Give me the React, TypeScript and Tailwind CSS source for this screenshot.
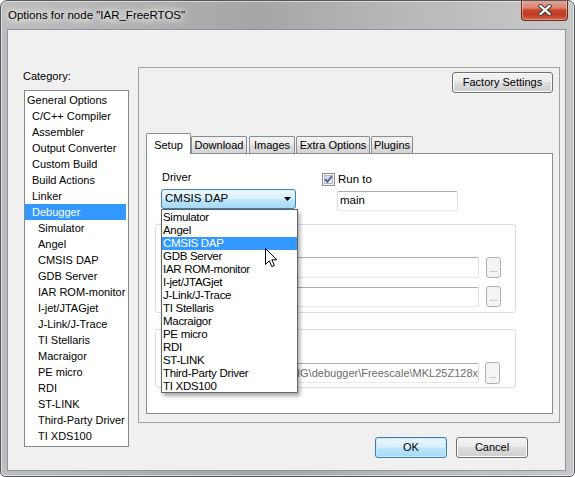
import React from "react";

const cats: [string, number][] = [
  ["General Options", 0],
  ["C/C++ Compiler", 1],
  ["Assembler", 1],
  ["Output Converter", 1],
  ["Custom Build", 1],
  ["Build Actions", 1],
  ["Linker", 1],
  ["Debugger", 1],
  ["Simulator", 2],
  ["Angel", 2],
  ["CMSIS DAP", 2],
  ["GDB Server", 2],
  ["IAR ROM-monitor", 2],
  ["I-jet/JTAGjet", 2],
  ["J-Link/J-Trace", 2],
  ["TI Stellaris", 2],
  ["Macraigor", 2],
  ["PE micro", 2],
  ["RDI", 2],
  ["ST-LINK", 2],
  ["Third-Party Driver", 2],
  ["TI XDS100", 2],
];

const indent = ["pl-[2px]", "pl-[7px]", "pl-[13px]"];

const drivers = [
  "Simulator",
  "Angel",
  "CMSIS DAP",
  "GDB Server",
  "IAR ROM-monitor",
  "I-jet/JTAGjet",
  "J-Link/J-Trace",
  "TI Stellaris",
  "Macraigor",
  "PE micro",
  "RDI",
  "ST-LINK",
  "Third-Party Driver",
  "TI XDS100",
];

const btn =
  "flex items-center justify-center rounded-[3px] border border-[#707070] bg-[linear-gradient(180deg,#f2f2f2_0%,#ebebeb_48%,#dddddd_50%,#cfcfcf_100%)] shadow-[inset_0_0_0_1px_#fcfcfc] text-black";

const tb =
  "border border-[#abadb3] border-l-[#dbdfe6] border-r-[#dbdfe6] border-b-[#e3e9ef] rounded-[2px] bg-white";

const dots =
  "flex items-end justify-center pb-[3px] rounded-[3px] border border-[#adb2b5] bg-[#f4f4f4] text-[#838383] text-[9px] leading-none";

function Tab({ label, w, sel, ml }: { label: string; w: string; sel?: boolean; ml?: string }) {
  if (sel) {
    return (
      <div className={`${w} h-[21px] border border-b-0 border-[#898c95] bg-white flex items-start justify-center pt-[3px] rounded-t-[2px]`}>
        {label}
      </div>
    );
  }
  return (
    <div
      className={`${w} ${ml ?? ""} mt-[3px] h-[17px] border border-b-0 border-[#898c95] bg-[linear-gradient(180deg,#f3f3f3_0%,#ebebeb_50%,#dddddd_52%,#d5d5d5_100%)] flex items-center justify-center rounded-t-[2px]`}
    >
      {label}
    </div>
  );
}

export default function App() {
  return (
    <div
      className="relative w-[575px] h-[477px] overflow-hidden rounded-t-[7px] rounded-b-[5px] border border-[#555a60] bg-[linear-gradient(90deg,#bdbdbd_0%,#b2b2b2_20%,#a6a6a6_45%,#b8b8b8_70%,#c8c8c8_100%)] text-[11px] text-black flex flex-col"
      style={{ fontFamily: '"Liberation Sans", Arial, sans-serif' }}
    >
      {/* glass highlight */}
      <div className="absolute inset-0 rounded-t-[6px] rounded-b-[4px] border border-white/50 pointer-events-none" />
      {/* Title bar */}
      <div className="relative h-[28px] flex items-start justify-between">
        <div className="mt-[7px] ml-[7px] text-[11.5px] leading-[14px] [text-shadow:0_0_6px_#ffffff,0_0_10px_#ffffff,0_0_14px_#ffffff]">
          {'Options for node "IAR_FreeRTOS"'}
        </div>
        <div className="mr-[6px] -mt-[1px] w-[47px] h-[21px] rounded-b-[4px] border border-t-0 border-[#6b2a20] bg-[linear-gradient(180deg,#e6a898_0%,#d88470_40%,#c6452b_50%,#c13a22_75%,#d4684c_100%)] shadow-[inset_0_0_0_1px_rgba(255,255,255,0.35)] flex items-center justify-center">
          <svg width="14" height="12" viewBox="0 0 14 12">
            <path d="M2.5 2 L11.5 10 M11.5 2 L2.5 10" stroke="#3c3c3c" strokeWidth="4.2" strokeLinecap="square" />
            <path d="M2.5 2 L11.5 10 M11.5 2 L2.5 10" stroke="#ffffff" strokeWidth="2.2" strokeLinecap="square" />
          </svg>
        </div>
      </div>

      {/* Client area */}
      <div className="relative ml-[6px] mr-[8px] h-[442px] border border-[#8a95a1] bg-[#f0f0f0] flex">
        {/* Left column */}
        <div className="ml-[16px] flex flex-col">
          <div className="mt-[40px] h-[13px] leading-[13px] -ml-[1px]">Category:</div>
          <div className="mt-[7px] w-[105px] h-[357px] border border-[#828790] bg-white pt-[1px]">
            {cats.map(([name, lvl]) => (
              <div
                key={name}
                className={`h-[16px] leading-[16px] mr-[2px] whitespace-nowrap ${indent[lvl]} ${
                  name === "Debugger" ? "bg-[#3399ff] text-white" : ""
                }`}
              >
                {name}
              </div>
            ))}
          </div>
        </div>

        {/* Right column */}
        <div className="ml-[9px] flex flex-col">
          <div className="mt-[37px] w-[422px] h-[356px] border border-[#a0a0a0] flex flex-col">
            <div className={`${btn} self-end mr-[6px] mt-[4px] w-[101px] h-[21px]`}>Factory Settings</div>

            {/* Tabs */}
            <div className="relative z-10 mt-[40px] ml-[7px] h-[21px] flex items-start">
              <Tab label="Setup" w="w-[45px]" sel />
              <Tab label="Download" w="w-[56px]" />
              <Tab label="Images" w="w-[46px]" ml="ml-[2px]" />
              <Tab label="Extra Options" w="w-[74px]" ml="ml-[1px]" />
              <Tab label="Plugins" w="w-[42px]" ml="ml-[1px]" />
            </div>

            {/* Page */}
            <div className="-mt-[1px] ml-[7px] mr-[6px] h-[261px] border border-[#898c95] bg-white flex flex-col">
              <div className="flex pl-[14px] pt-[17px]">
                <div className="w-[136px] flex flex-col">
                  <div className="h-[13px] leading-[13px] ml-[1px]">Driver</div>
                  <div className="relative mt-[5px] w-[135px] h-[20px]">
                    <div className="w-full h-full rounded-[3px] border border-[#3c7fb1] bg-[linear-gradient(180deg,#eaf6fd_0%,#d9f0fc_48%,#bee6fd_52%,#a7d9f5_100%)] flex items-center pl-[3px] text-[11.5px]">
                      CMSIS DAP
                      <svg className="absolute right-[5px] top-[8px]" width="7" height="4" viewBox="0 0 7 4">
                        <path d="M0 0 H7 L3.5 4 Z" fill="#000" />
                      </svg>
                    </div>
                    {/* dropdown list */}
                    <div className="absolute top-[20px] left-0 w-[137px] h-[184px] z-20 border border-[#646464] bg-white pt-[1px] shadow-[2px_3px_4px_rgba(0,0,0,0.35)]">
                      {drivers.map((d) => (
                        <div
                          key={d}
                          className={`h-[13px] leading-[13px] pl-[1px] text-[11.5px] tracking-[-0.3px] whitespace-nowrap ${
                            d === "CMSIS DAP" ? "bg-[#3399ff] text-white" : ""
                          }`}
                        >
                          {d}
                        </div>
                      ))}
                    </div>
                  </div>
                </div>
                <div className="ml-[25px] flex flex-col">
                  <div className="mt-[2px] h-[13px] flex items-center">
                    <svg width="13" height="13" viewBox="0 0 13 13">
                      <defs>
                        <linearGradient id="cb" x1="0" y1="0" x2="1" y2="1">
                          <stop offset="0" stopColor="#cbd3dc" />
                          <stop offset="1" stopColor="#f4f6f8" />
                        </linearGradient>
                      </defs>
                      <rect x="0.5" y="0.5" width="12" height="12" fill="#f4f4f4" stroke="#8e8f8f" />
                      <rect x="2.5" y="2.5" width="8" height="8" fill="url(#cb)" stroke="#b0b8c0" />
                      <path d="M3.2 6.2 L5.4 8.8 L9.8 3.2" fill="none" stroke="#4a5f97" strokeWidth="1.8" />
                    </svg>
                    <span className="ml-[3px] text-[11.5px]">Run to</span>
                  </div>
                  <div className={`${tb} mt-[5px] ml-[15px] w-[121px] h-[20px] flex items-center pl-[2px] text-[11.5px]`}>main</div>
                </div>
              </div>

              {/* Group 1 */}
              <div className="mt-[13px] ml-[8px] w-[361px] h-[89px] rounded-[3px] border border-[#d5dfe5] pt-[32px] pl-[9px] flex flex-col">
                <div className="flex items-start">
                  <div className={`${tb} w-[314px] h-[21px]`} />
                  <div className={`${dots} ml-[7px] w-[15px] h-[21px]`}>...</div>
                </div>
                <div className="mt-[9px] flex items-start">
                  <div className={`${tb} w-[314px] h-[20px]`} />
                  <div className={`${dots} ml-[7px] -mt-[1px] w-[15px] h-[21px]`}>...</div>
                </div>
              </div>

              {/* Group 2 */}
              <div className="mt-[16px] ml-[8px] w-[361px] h-[59px] rounded-[3px] border border-[#d5dfe5] pt-[33px] pl-[9px] flex flex-col">
                <div className="flex items-start">
                  <div className={`${tb} w-[314px] h-[20px] overflow-hidden flex items-center justify-end text-[11px] text-[#6d6d6d] whitespace-nowrap`}>
                    {"$TOOLKIT_DIR$\\CONFIG\\debugger\\Freescale\\MKL25Z128x"}
                  </div>
                  <div className={`${dots} ml-[6px] -mt-[1px] w-[15px] h-[22px]`}>...</div>
                </div>
              </div>
            </div>
          </div>

          {/* OK / Cancel */}
          <div className="mt-[14px] flex justify-end gap-[9px] pr-[32px]">
            <div className="w-[72px] h-[21px] flex items-center justify-center rounded-[3px] border border-[#3c7fb1] bg-[linear-gradient(180deg,#eaf6fd_0%,#d9f0fc_48%,#bee6fd_52%,#a7d9f5_100%)] shadow-[inset_0_0_0_1px_#c8e9fb]">
              OK
            </div>
            <div className={`${btn} w-[72px] h-[21px]`}>Cancel</div>
          </div>
        </div>
      </div>

      {/* Cursor */}
      <svg className="absolute left-[264px] top-[247px] z-30" width="13" height="20" viewBox="0 0 13 20">
        <path
          d="M0.5 0.5 L0.5 16.5 L4.3 12.8 L6.8 18.6 L9.4 17.5 L6.9 11.8 L11.8 11.8 Z"
          fill="#ffffff"
          stroke="#000000"
          strokeWidth="1"
          strokeLinejoin="miter"
        />
      </svg>
    </div>
  );
}
